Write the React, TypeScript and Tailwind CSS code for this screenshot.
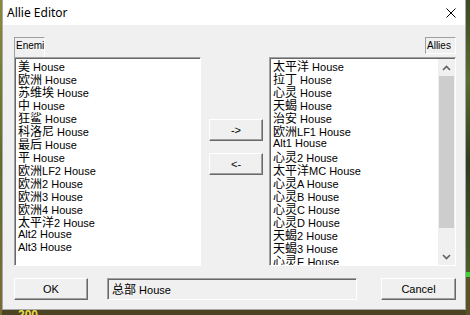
import React from 'react';

const enemies = [
    '美 House', '欧洲 House', '苏维埃 House', '中 House', '狂鲨 House', '科洛尼 House', '最后 House', '平 House',
    '欧洲LF2 House', '欧洲2 House', '欧洲3 House', '欧洲4 House', '太平洋2 House', 'Alt2 House', 'Alt3 House',
];

const allies = [
    '太平洋 House', '拉丁 House', '心灵 House', '天蝎 House', '治安 House', '欧洲LF1 House', 'Alt1 House', '心灵2 House',
    '太平洋MC House', '心灵A House', '心灵B House', '心灵C House', '心灵D House', '天蝎2 House', '天蝎3 House', '心灵E House',
];

// CJK glyphs are a touch larger than the latin text in the original dialog
const MixedText: React.FC<{ text: string }> = ({ text }) => {
    const parts = text.split(/([\u4e00-\u9fff]+)/).filter(Boolean);
    return (
        <span className="whitespace-pre">
            {parts.map((p, i) =>
                /[\u4e00-\u9fff]/.test(p) ? (
                    <span key={i} className="text-[12px] font-['Noto_Sans_CJK_SC',sans-serif]">{p}</span>
                ) : (
                    <span key={i}>{p}</span>
                )
            )}
        </span>
    );
};

const Button: React.FC<{ label: string; className?: string }> = ({ label, className = '' }) => (
    <button
        className={`h-[22px] bg-[#f0f0f0] border border-t-white border-l-white border-b-[#696969] border-r-[#696969] shadow-[inset_-1px_-1px_0_#a0a0a0] text-[11px] text-black leading-none ${className}`}
    >
        {label}
    </button>
);

const Chevron: React.FC<{ up?: boolean }> = ({ up }) => (
    <svg width="9" height="6" viewBox="0 0 9 6" className={up ? '' : 'rotate-180'}>
        <path d="M1 5 L4.5 1.5 L8 5" fill="none" stroke="#606060" strokeWidth="1.6" />
    </svg>
);

const ListBox: React.FC<{ items: string[]; scroll?: boolean }> = ({ items, scroll }) => (
    <div className="w-[187px] h-[209px] bg-white border border-t-[#a0a0a0] border-l-[#a0a0a0] border-b-white border-r-white shadow-[inset_1px_1px_0_#696969] flex overflow-hidden">
        <div className="flex-1 pl-[3px] pt-[1px] overflow-hidden">
            {items.map(item => (
                <div key={item} className="h-[13px] leading-[13px] text-[11px] text-[#000] whitespace-nowrap">
                    <MixedText text={item} />
                </div>
            ))}
        </div>
        {scroll && (
            <div className="w-[17px] mt-[1px] bg-[#f0f0f0] flex flex-col">
                <div className="h-[17px] flex items-center justify-center">
                    <Chevron up />
                </div>
                <div className="h-[152px] mx-[1px] bg-[#cdcdcd]" />
                <div className="flex-1" />
                <div className="h-[17px] flex items-center justify-center">
                    <Chevron />
                </div>
            </div>
        )}
    </div>
);

export default function App() {
    return (
        <div className="w-[470px] h-[315px] overflow-hidden flex bg-[linear-gradient(180deg,#6a6b35,#4b5a2a_40%,#5e4e2a_75%,#4a4424)] font-['Liberation_Sans','Noto_Sans_CJK_SC',sans-serif]">
            <div className="w-[2px] shrink-0 bg-[linear-gradient(180deg,#8a8a3a,#5f6e30_50%,#7a6a36)]" />
            <div className="w-[464px] shrink-0 flex flex-col">
                <div className="h-[310px] bg-[#f0f0f0] border-x border-b border-[#a8a8a8] flex flex-col">
                    {/* title bar */}
                    <div className="h-[25px] bg-white flex items-center justify-between pl-[4px] pr-[9px]">
                        <span className="text-[12px] text-black font-['Noto_Sans',sans-serif]">Allie Editor</span>
                        <svg width="10" height="10" viewBox="0 0 10 10">
                            <path d="M0.5 0.5 L9.5 9.5 M9.5 0.5 L0.5 9.5" stroke="#000" strokeWidth="1" />
                        </svg>
                    </div>

                    <div className="flex flex-col pl-[11px] pr-[9px] pt-[12px]">
                        {/* labels */}
                        <div className="h-[20px] flex justify-between items-start">
                            <div className="w-[31px] h-[20px] border-t border-l border-r border-t-[#a0a0a0] border-l-[#a0a0a0] border-r-white overflow-hidden whitespace-nowrap pl-[1px] pt-[1px] text-[10px] leading-[13px] text-black">
                                Enemies
                            </div>
                            <div className="w-[31px] h-[17px] border border-t-[#a0a0a0] border-l-[#a0a0a0] border-b-white border-r-white overflow-hidden whitespace-nowrap pl-[1px] pt-[1px] text-[10px] leading-[13px] text-black">
                                Allies
                            </div>
                        </div>

                        {/* lists */}
                        <div className="flex h-[209px]">
                            <ListBox items={enemies} />
                            <div className="w-[54px] ml-[8px] mr-[6px] flex flex-col gap-[12px] pt-[62px]">
                                <Button label="->" className="w-full" />
                                <Button label="<-" className="w-full" />
                            </div>
                            <ListBox items={allies} scroll />
                        </div>

                        {/* bottom row */}
                        <div className="flex mt-[12px] h-[22px]">
                            <Button label="OK" className="w-[74px]" />
                            <div className="w-[250px] ml-[19px] mr-[24px] h-[22px] bg-[#f0f0f0] border border-t-[#a0a0a0] border-l-[#a0a0a0] border-b-white border-r-white shadow-[inset_1px_1px_0_#696969] flex items-center pl-[4px] text-[11px] text-black">
                                <MixedText text="总部 House" />
                            </div>
                            <Button label="Cancel" className="w-[75px]" />
                        </div>
                    </div>
                </div>
                <div className="h-[5px] overflow-hidden pl-[16px]">
                    <span className="block text-[12px] leading-[10px] font-bold text-[#e8d84a]">200</span>
                </div>
            </div>
            <div className="w-[4px] shrink-0 flex flex-col">
                <div className="h-[272px] bg-[linear-gradient(180deg,#3c4a24,#5a6a30_30%,#2f3a1e_60%,#4d5a2a)]" />
                <div className="h-[5px] bg-[#3ed13a]" />
                <div className="flex-1 bg-[#5a5226]" />
            </div>
        </div>
    );
}
